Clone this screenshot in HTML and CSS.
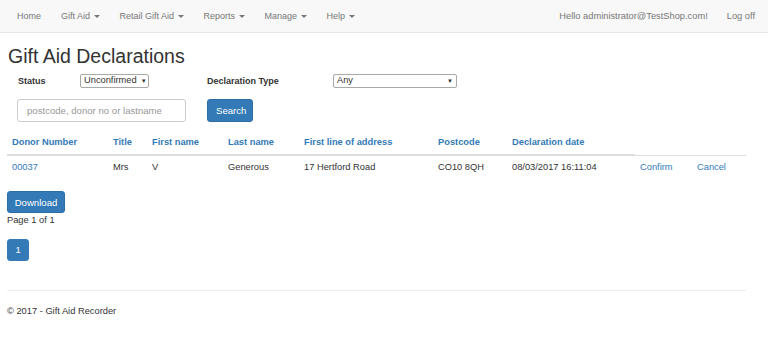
FILE: index.html
```html
<!DOCTYPE html>
<html>
<head>
<meta charset="utf-8">
<link rel="stylesheet" href="styles.css">
</head>
<body>
<nav class="navbar">
  <ul class="nav-left">
    <li>Home</li>
    <li>Gift Aid <span class="caret"></span></li>
    <li>Retail Gift Aid <span class="caret"></span></li>
    <li>Reports <span class="caret"></span></li>
    <li>Manage <span class="caret"></span></li>
    <li>Help <span class="caret"></span></li>
  </ul>
  <ul class="nav-right">
    <li>Hello administrator@TestShop.com!</li>
    <li>Log off</li>
  </ul>
</nav>
<main class="container">
  <h1 class="title">Gift Aid Declarations</h1>
  <div class="filters">
    <label class="flabel status-label">Status</label>
    <div class="select sel-status"><span>Unconfirmed</span><span class="arrow">▼</span></div>
    <label class="flabel type-label">Declaration Type</label>
    <div class="select sel-type"><span>Any</span><span class="arrow">▼</span></div>
  </div>
  <div class="search-row">
    <div class="input">postcode, donor no or lastname</div>
    <button class="btn search-btn">Search</button>
  </div>
  <table class="grid">
    <thead>
      <tr>
        <th class="c1">Donor Number</th>
        <th class="c2">Title</th>
        <th class="c3">First name</th>
        <th class="c4">Last name</th>
        <th class="c5">First line of address</th>
        <th class="c6">Postcode</th>
        <th class="c7">Declaration date</th>
      </tr>
    </thead>
    <tbody>
      <tr>
        <td class="link">00037</td>
        <td>Mrs</td>
        <td>V</td>
        <td>Generous</td>
        <td>17 Hertford Road</td>
        <td>CO10 8QH</td>
        <td>08/03/2017 16:11:04</td>
        <td class="link act1">Confirm</td>
        <td class="link act2">Cancel</td>
      </tr>
    </tbody>
  </table>
  <button class="btn download-btn">Download</button>
  <p class="page-info">Page 1 of 1</p>
  <div class="pagination"><span class="page active">1</span></div>
  <hr class="rule">
  <footer class="footer">© 2017 - Gift Aid Recorder</footer>
</main>
</body>
</html>
```
FILE: styles.css
```css
* { box-sizing: border-box; }
html, body { margin: 0; padding: 0; }
body {
  font-family: "Liberation Sans", Arial, sans-serif;
  font-size: 9.3px;
  line-height: 1.42;
  color: #333;
  background: #fff;
}
.navbar {
  height: 33px;
  background: #f8f8f8;
  border-bottom: 1px solid #e7e7e7;
  display: flex;
  justify-content: space-between;
  align-items: center;
}
.navbar ul {
  list-style: none;
  margin: 0;
  padding: 0;
  display: flex;
  color: #777;
}
.nav-left { padding-left: 17px !important; gap: 20px; font-size: 9px; }
.nav-right { padding-right: 13px !important; gap: 19px; }
.navbar li { line-height: 14px; white-space: nowrap; }
.caret {
  display: inline-block;
  width: 0; height: 0;
  margin-left: 1px;
  vertical-align: middle;
  border-top: 3px solid #777;
  border-left: 3px solid transparent;
  border-right: 3px solid transparent;
}
.container { padding: 0 22px 0 7px; }
.title {
  font-weight: 500;
  font-size: 19.5px;
  line-height: 22px;
  margin: 12px 0 4px 1px;
  color: #333;
}
.filters {
  display: flex;
  align-items: center;
  height: 20px;
}
.flabel { font-weight: bold; font-size: 9px; }
.status-label { margin-left: 11px; width: 62px; }
.select {
  display: flex;
  align-items: center;
  justify-content: space-between;
  border: 1px solid #a9a9a9;
  border-radius: 2px;
  height: 14px;
  padding: 0 3px 0 3px;
  font-size: 9.3px;
  color: #333;
  background: #fff;
}
.select .arrow { font-size: 6px; margin-left: 4px; color: #333; }
.sel-status { width: 69px; }
.type-label { margin-left: 58px; width: 126px; }
.sel-type { width: 124px; }
.search-row {
  display: flex;
  align-items: center;
  margin-top: 8px;
  gap: 21px;
  padding-left: 10px;
}
.input {
  width: 169px;
  height: 23px;
  border: 1px solid #ccc;
  border-radius: 3px;
  padding: 0 9px;
  line-height: 21px;
  color: #999;
  font-size: 9.6px;
}
.btn {
  font-family: inherit;
  font-size: 9.6px;
  color: #fff;
  background: #337ab7;
  border: 1px solid #2e6da4;
  border-radius: 3px;
  height: 23px;
  padding: 0 8px;
  display: block;
}
.search-btn { width: 46px; }
.grid {
  border-collapse: collapse;
  margin-top: 6px;
  width: 739px;
}
.grid th {
  text-align: left;
  color: #337ab7;
  font-weight: bold;
  font-size: 9.3px;
  padding: 8px 5px 5px 5px;
  border-bottom: 2px solid #ddd;
  white-space: nowrap;
}
.grid td {
  padding: 5px 5px 5px 5px;
  border-top: 1px solid #ddd;
  height: 24px;
  white-space: nowrap;
}
.c1 { width: 101px; }
.c2 { width: 39px; }
.c3 { width: 76px; }
.c4 { width: 76px; }
.c5 { width: 134px; }
.c6 { width: 74px; }
.c7 { width: 128px; }
.link { color: #337ab7; }
.act1 { width: 57px; }
.download-btn { margin-top: 12px; width: 58px; height: 22px; padding: 0; }
.page-info { margin: 0; line-height: 14px; }
.pagination { margin-top: 12px; }
.page {
  display: inline-block;
  width: 22px;
  height: 22px;
  line-height: 20px;
  text-align: center;
  color: #fff;
  background: #337ab7;
  border: 1px solid #337ab7;
  border-radius: 3px;
}
.rule {
  border: 0;
  border-top: 1px solid #eee;
  margin: 29px 0 0 0;
}
.footer { margin-top: 13px; line-height: 14px; }
```
